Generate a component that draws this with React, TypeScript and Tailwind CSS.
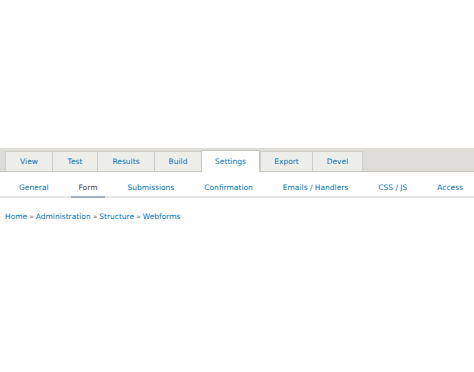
const primaryTabs = [
  { label: 'View', w: 'w-[47px]' },
  { label: 'Test', w: 'w-[45px]' },
  { label: 'Results', w: 'w-[57px]' },
  { label: 'Build', w: 'w-[47px]' },
  { label: 'Settings', w: 'w-[59px]' },
  { label: 'Export', w: 'w-[52px]' },
  { label: 'Devel', w: 'w-[51px]' },
];
const secondaryTabs = ['General', 'Form', 'Submissions', 'Confirmation', 'Emails / Handlers', 'CSS / JS', 'Access'];
const crumbs = ['Home', 'Administration', 'Structure', 'Webforms'];

export default function App() {
  return (
    <div className="w-[474px] h-[372px] bg-white text-[7.5px] text-[#0074bd]" style={{ fontFamily: '"DejaVu Sans", sans-serif' }}>
      <div className="pt-[148px]">
        {/* primary tabs */}
        <div className="h-[24px] bg-[#dedcd6] border-b border-[#c9c8c2] pl-[5px] flex items-end">
          {primaryTabs.map((tab) => (
            <a
              key={tab.label}
              href="#"
              className={
                tab.w +
                (tab.label === 'Settings'
                  ? ' h-[22px] -mb-px flex items-center justify-center bg-white border border-b-0 border-[#c9c8c2]'
                  : ' h-[20px] flex items-center justify-center bg-[#ededea] border-l border-t border-[#cfcec8] last:border-r')
              }
            >
              {tab.label}
            </a>
          ))}
        </div>

        {/* secondary tabs */}
        <div className="mt-[7px] h-[19px] border-b-2 border-[#e4e4e2] pl-[4px] flex whitespace-nowrap">
          {secondaryTabs.map((tab) => (
            <a
              key={tab}
              href="#"
              className={
                'mx-[7px] px-[8px] flex items-center pt-px -mb-[2px] border-b-2 ' +
                (tab === 'Form' ? 'border-[#a6b2bd] text-[#3b4550]' : 'border-transparent')
              }
            >
              {tab}
            </a>
          ))}
        </div>

        {/* breadcrumb */}
        <div className="mt-[13px] pl-[5px] flex gap-[2px]">
          {crumbs.map((c, i) => (
            <span key={c} className="flex gap-[2px]">
              {i > 0 && <span className="text-[#666]">»</span>}
              <a href="#">{c}</a>
            </span>
          ))}
        </div>
      </div>
    </div>
  );
}
